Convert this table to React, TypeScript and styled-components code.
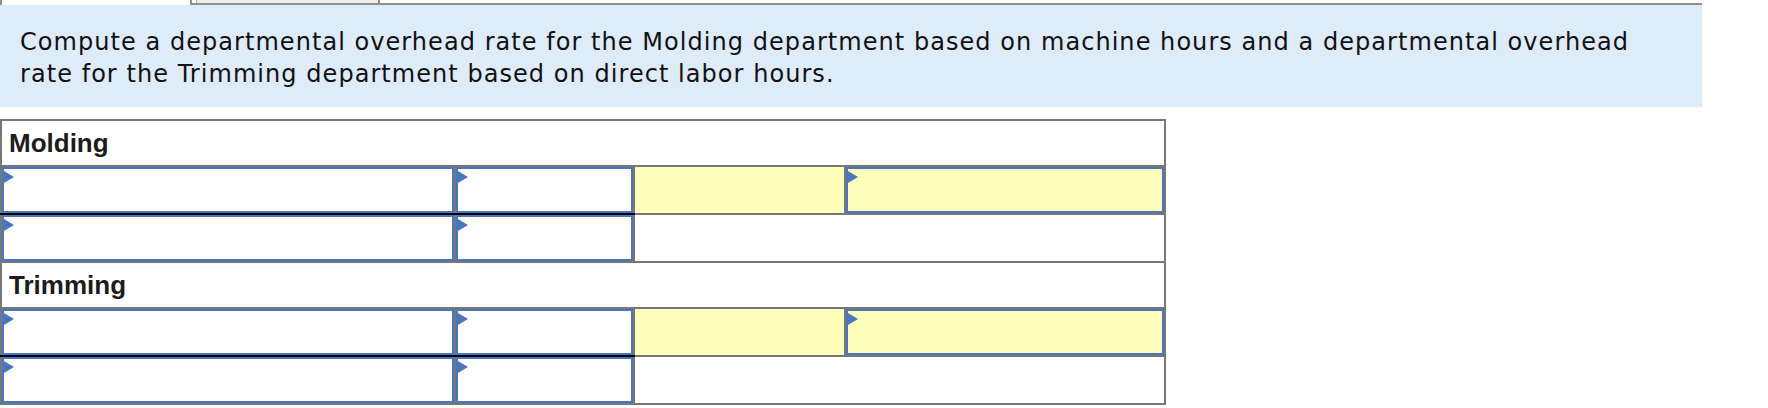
import React from 'react'
import styled, { createGlobalStyle } from 'styled-components'

const GlobalStyle = createGlobalStyle`
  html, body {
    margin: 0;
    padding: 0;
    background: #ffffff;
  }
`

const Page = styled.div`
  width: 1768px;
  display: flex;
  flex-direction: column;
  font-family: "Liberation Sans", Arial, sans-serif;
`

const TabStrip = styled.div`
  display: flex;
  width: 1702px;
  height: 5px;
`

const Tab = styled.div<{ $active?: boolean }>`
  box-sizing: border-box;
  width: 190px;
  height: 5px;
  border-left: 2px solid #8e8e8e;
  border-bottom: ${(p) => (p.$active ? 'none' : '2px solid #8e8e8e')};
  padding-left: ${(p) => (p.$active ? '0' : '4px')};
  display: flex;
`

const TabFill = styled.div`
  flex: 1;
  height: 3px;
  background: #eeeeee;
  border-left: 1px solid #bdbdbd;
  border-right: 2px solid #8e8e8e;
`

const TabRest = styled.div`
  flex: 1;
  box-sizing: border-box;
  height: 5px;
  border-bottom: 2px solid #8e8e8e;
`

const Prompt = styled.div`
  box-sizing: border-box;
  width: 1702px;
  height: 102px;
  background: #deebf8;
  padding: 21px 40px 0 20px;
  font-family: "DejaVu Sans", Verdana, sans-serif;
  font-size: 24px;
  letter-spacing: 1.05px;
  line-height: 32px;
  color: #111111;
`

const Grid = styled.table`
  margin-top: 12px;
  border-collapse: collapse;
  border: 2px solid #777777;
  width: 1166px;
  table-layout: fixed;
`

const Cell = styled.td<{ $fill?: string; $rule?: boolean }>`
  padding: 0;
  height: 46px;
  border: 2px solid #777777;
  border-bottom: ${(p) => (p.$rule ? '2px solid #000000' : '2px solid #777777')};
  background: ${(p) => p.$fill || '#ffffff'};
  vertical-align: top;
`

const HeadCell = styled.td`
  padding: 0 0 0 7px;
  height: 44px;
  border: 2px solid #777777;
  font-family: "Liberation Sans", Arial, sans-serif;
  font-weight: bold;
  font-size: 26px;
  color: #1c1c1c;
  vertical-align: middle;
`

const Entry = styled.div<{ $fill?: string }>`
  position: relative;
  box-sizing: border-box;
  height: 46px;
  width: 100%;
  border: 2px solid #4a76bd;
  background: ${(p) => p.$fill || '#ffffff'};

  &::before {
    content: '';
    position: absolute;
    left: 0;
    top: 2px;
    width: 0;
    height: 0;
    border-top: 6px solid transparent;
    border-bottom: 6px solid transparent;
    border-left: 10px solid #4a76bd;
  }
`

const YELLOW = '#ffffbb'

function Section({ title }: { title: string }) {
  return (
    <>
      <tr>
        <HeadCell colSpan={4}>{title}</HeadCell>
      </tr>
      <tr>
        <Cell $rule><Entry /></Cell>
        <Cell $rule><Entry /></Cell>
        <Cell $fill={YELLOW} />
        <Cell><Entry $fill={YELLOW} /></Cell>
      </tr>
      <tr>
        <Cell><Entry /></Cell>
        <Cell><Entry /></Cell>
        <Cell colSpan={2} />
      </tr>
    </>
  )
}

export default function App() {
  return (
    <>
      <GlobalStyle />
      <Page>
        <TabStrip>
          <Tab $active />
          <Tab><TabFill /></Tab>
          <TabRest />
        </TabStrip>
        <Prompt>
          Compute a departmental overhead rate for the Molding department based on machine hours and a departmental overhead
          rate for the Trimming department based on direct labor hours.
        </Prompt>
        <Grid>
          <colgroup>
            <col style={{ width: 454 }} />
            <col style={{ width: 179 }} />
            <col style={{ width: 211 }} />
            <col style={{ width: 320 }} />
          </colgroup>
          <tbody>
            <Section title="Molding" />
            <Section title="Trimming" />
          </tbody>
        </Grid>
      </Page>
    </>
  )
}
